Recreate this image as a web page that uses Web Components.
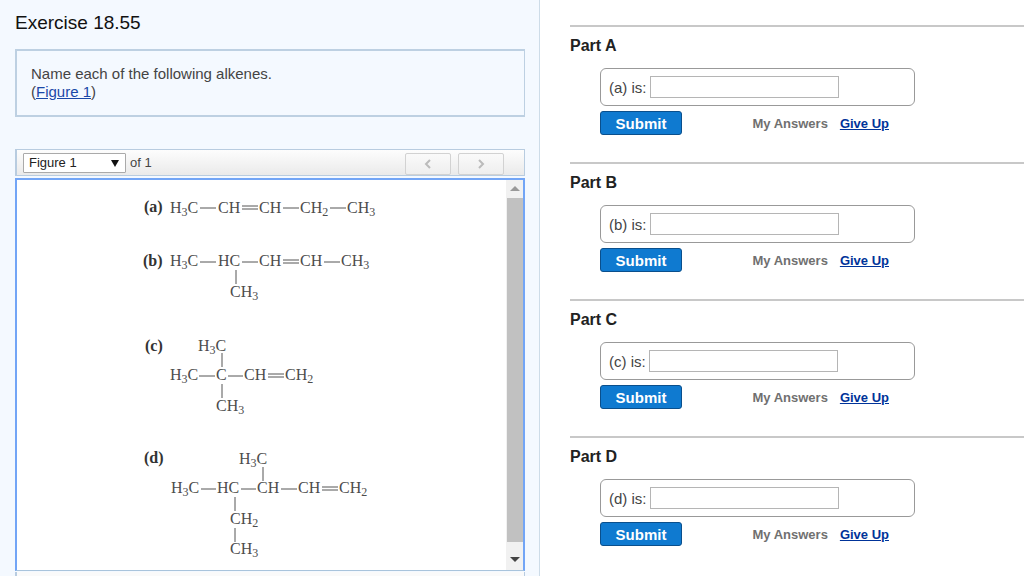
<!DOCTYPE html>
<html lang="en">
<head>
<meta charset="utf-8">
<title>Exercise 18.55</title>
<style>
	body {
		margin: 0;
		font-family: "Liberation Sans", Arial, sans-serif;
		color: #444;
		background: #fff;
	}
</style>
</head>
<body>
<exercise-page>
	<span slot="title">Exercise 18.55</span>
	<problem-box slot="problem">
		Name each of the following alkenes.<br>
		(<figure-link>Figure 1</figure-link>)
	</problem-box>
	<figure-panel slot="problem">
		<alkene-figure></alkene-figure>
	</figure-panel>
	<exercise-part name="Part A" label="(a) is:"></exercise-part>
	<exercise-part name="Part B" label="(b) is:"></exercise-part>
	<exercise-part name="Part C" label="(c) is:"></exercise-part>
	<exercise-part name="Part D" label="(d) is:"></exercise-part>
</exercise-page>

<script>
/**
 * attach an open shadow root to the element and fill it with the template
 */
function render(element, html) {
	const template = document.createElement("template");
	template.innerHTML = html.trim();
	element.attachShadow({mode: "open"});
	element.shadowRoot.appendChild(template.content.cloneNode(true));
}

/**
 * exercise-page: problem on the left, answer parts on the right
 */
class ExercisePage extends HTMLElement {
	static template = `
	<style>
		:host {
			display: grid;
			grid-template-columns: minmax(0, 135fr) minmax(0, 121fr);
			height: 100vh;
		}
		.problem, .parts {
			overflow-y: auto;
			scrollbar-width: none;
		}
		.problem {
			box-sizing: border-box;
			padding: 11px 14px 0 15px;
			background: #f4f9ff;
			border-right: 1px solid #cddce8;
		}
		.parts {
			padding: 25px 0 0 30px;
		}
		h1 {
			margin: 0 0 14px;
			font-size: 19px;
			line-height: 24px;
			font-weight: normal;
			color: #111;
		}
	</style>
	<section class="problem">
		<h1><slot name="title"></slot></h1>
		<slot name="problem"></slot>
	</section>
	<main class="parts"><slot></slot></main>
	`;

	constructor() {
		super();
		render(this, ExercisePage.template);
	}
}

customElements.define("exercise-page", ExercisePage);

/**
 * problem-box: the bordered box with the question
 */
class ProblemBox extends HTMLElement {
	static template = `
	<style>
		:host {
			display: block;
			margin-bottom: 32px;
			padding: 14px;
			border: 2px solid #bdd0e2;
			border-right-width: 1px;
			font-size: 15px;
			line-height: 18px;
		}
	</style>
	<slot></slot>
	`;

	constructor() {
		super();
		render(this, ProblemBox.template);
	}
}

customElements.define("problem-box", ProblemBox);

class FigureLink extends HTMLElement {
	static template = `<style>a { color: #1a48a8; }</style><a href="#figure"><slot></slot></a>`;

	constructor() {
		super();
		render(this, FigureLink.template);
	}
}

customElements.define("figure-link", FigureLink);

/**
 * figure-panel: toolbar with the figure picker, and the viewer below it
 */
class FigurePanel extends HTMLElement {
	static template = `
	<style>
		:host {
			display: block;
		}
		.toolbar {
			display: flex;
			align-items: center;
			box-sizing: border-box;
			height: 27px;
			padding: 0 20px 0 6px;
			border: 1px solid #b8cce0;
			border-left-width: 2px;
			background: linear-gradient(#fdfdfd, #eaeaea);
			font-size: 13px;
		}
		.picker {
			position: relative;
			display: flex;
			margin-right: 4px;
		}
		select {
			appearance: none;
			box-sizing: border-box;
			width: 103px;
			height: 20px;
			padding: 0 20px 0 5px;
			border: 1px solid #aaa;
			border-radius: 1px;
			background: #fff;
			color: #222;
			font: inherit;
		}
		.picker svg {
			position: absolute;
			right: 7px;
			top: 7px;
			pointer-events: none;
		}
		.steps {
			display: flex;
			gap: 7px;
			margin: 2px 0 0 auto;
		}
		.steps button {
			display: flex;
			align-items: center;
			justify-content: center;
			width: 46px;
			height: 22px;
			padding: 0;
			border: 1px solid #d2d2d2;
			border-radius: 2px;
			background: linear-gradient(#fafafa, #eee);
		}
		.viewer {
			display: flex;
			margin-top: 2px;
			border: 2px solid #72a5f6;
			border-bottom: 1px solid #a9c4dc;
			background: #fff;
		}
		.canvas {
			flex: 1;
			min-width: 0;
		}
		.scrollbar {
			display: flex;
			flex-direction: column;
			width: 17px;
			background: #f1f1f1;
		}
		.scrollbar svg {
			display: block;
			flex: none;
		}
		.thumb {
			flex: 1;
			margin: 1px 0 11px 1px;
			background: #c1c1c1;
		}
		.next {
			height: 27px;
			margin-top: 1px;
			border: 1px solid #b8cce0;
			border-top: none;
			border-left-width: 2px;
			background: #fafafa;
		}
	</style>
	<div class="toolbar">
		<div class="picker">
			<select id="figure" aria-label="Figure"><option>Figure 1</option></select>
			<svg width="8" height="7" viewBox="0 0 8 7"><path d="M0 0h8L4 7z" fill="#111"/></svg>
		</div>
		<span>of 1</span>
		<div class="steps">
			<button type="button" aria-label="Previous figure"><svg width="8" height="10" viewBox="0 0 8 10"><path d="M6 1 2 5l4 4" fill="none" stroke="#bbb" stroke-width="2"/></svg></button>
			<button type="button" aria-label="Next figure"><svg width="8" height="10" viewBox="0 0 8 10"><path d="m2 1 4 4-4 4" fill="none" stroke="#bbb" stroke-width="2"/></svg></button>
		</div>
	</div>
	<div class="viewer">
		<div class="canvas"><slot></slot></div>
		<div class="scrollbar" aria-hidden="true">
			<svg width="17" height="17" viewBox="0 0 17 17"><path d="M4 11h10L9 6z" fill="#999"/></svg>
			<div class="thumb"></div>
			<svg width="17" height="17" viewBox="0 0 17 17"><path d="M4 4h10l-5 5z" fill="#444"/></svg>
		</div>
	</div>
	<div class="next"></div>
	`;

	constructor() {
		super();
		render(this, FigurePanel.template);
	}
}

customElements.define("figure-panel", FigurePanel);

/**
 * alkene-figure: draws the four condensed structures
 *
 * groups: [formula, x, baseline]
 * bonds: [x1, y1, x2, y2], double bonds have two lines around that position
 */
class AlkeneFigure extends HTMLElement {
	static template = `
	<style>
		:host {
			display: block;
		}
		svg {
			display: block;
			width: 100%;
		}
		text {
			font: 16px "Liberation Serif", "Times New Roman", serif;
			fill: #4c4c4c;
		}
		.label {
			font-weight: bold;
			fill: #333;
		}
		.sub {
			font-size: 12px;
		}
		path {
			fill: none;
			stroke: #555;
		}
	</style>
	<svg viewBox="17 180 489 390" role="img" aria-label="Four alkenes"></svg>
	`;

	static labels = [["(a)", 144, 212], ["(b)", 143, 266], ["(c)", 145, 351], ["(d)", 144, 463]];

	static groups = [
		["H3C", 170, 213], ["CH", 218, 213], ["CH", 259, 213], ["CH2", 300, 213], ["CH3", 347, 213],
		["H3C", 170, 266], ["HC", 218, 266], ["CH", 259, 266], ["CH", 300, 266], ["CH3", 341, 266],
		["CH3", 230, 297],
		["H3C", 198, 351],
		["H3C", 170, 380], ["C", 216, 380], ["CH", 244, 380], ["CH2", 285, 380],
		["CH3", 216, 411],
		["H3C", 239, 464],
		["H3C", 171, 493], ["HC", 217, 493], ["CH", 257, 493], ["CH", 298, 493], ["CH2", 339, 493],
		["CH2", 230, 524],
		["CH3", 230, 554]
	];

	static bonds = [
		[200, 208, 216, 208], [283, 208, 299, 208], [330, 208, 346, 208],
		[200, 262, 216, 262], [242, 262, 258, 262], [324, 262, 340, 262], [236, 270, 236, 284],
		[199, 376, 215, 376], [228, 376, 243, 376], [222, 353, 222, 367], [222, 384, 222, 398],
		[201, 489, 216, 489], [241, 489, 256, 489], [281, 489, 297, 489],
		[263, 467, 263, 481], [235, 497, 235, 511], [235, 528, 235, 542]
	];

	static doubleBonds = [[242, 208, 258, 208], [283, 262, 299, 262], [268, 376, 284, 376], [322, 489, 338, 489]];

	constructor() {
		super();
		render(this, AlkeneFigure.template);

		const texts = AlkeneFigure.labels.map(([label, x, y]) => {
			return `<text class="label" x="${x}" y="${y}">${label}</text>`;
		});
		AlkeneFigure.groups.forEach(([formula, x, y]) => {
			texts.push(`<text x="${x}" y="${y}">${this.subscript(formula)}</text>`);
		});

		let d = "";
		AlkeneFigure.bonds.forEach(([x1, y1, x2, y2]) => {
			d += `M${x1} ${y1}L${x2} ${y2}`;
		});
		AlkeneFigure.doubleBonds.forEach(([x1, y1, x2, y2]) => {
			d += `M${x1} ${y1 - 2}L${x2} ${y2 - 2}M${x1} ${y1 + 1}L${x2} ${y2 + 1}`;
		});

		this.shadowRoot.querySelector("svg").innerHTML = texts.join("") + `<path d="${d}"/>`;
	}

	subscript(formula) {
		return formula
			.replace(/(\d)([A-Z])/, '<tspan class="sub" dy="3">$1</tspan><tspan dy="-3">$2</tspan>')
			.replace(/(\d)$/, '<tspan class="sub" dy="3">$1</tspan>');
	}
}

customElements.define("alkene-figure", AlkeneFigure);

/**
 * exercise-part: one answer with its submit button
 */
class ExercisePart extends HTMLElement {
	static observedAttributes = ["name", "label"];

	static template = `
	<style>
		:host {
			display: block;
			padding-bottom: 27px;
			border-top: 2px solid #c8c8c8;
		}
		h2 {
			margin: 9px 0 12px;
			font-size: 16px;
			line-height: 20px;
			color: #222;
		}
		form {
			max-width: 315px;
			margin: 0 30px;
		}
		.answer {
			display: flex;
			align-items: center;
			gap: 3px;
			box-sizing: border-box;
			height: 38px;
			padding-left: 8px;
			border: 1px solid #999;
			border-radius: 6px;
			font-size: 15px;
		}
		input {
			box-sizing: border-box;
			width: 189px;
			height: 22px;
			padding: 0 4px;
			border: 1px solid #b5b5b5;
			background: #fff;
			font: inherit;
		}
		.actions {
			display: flex;
			align-items: center;
			gap: 12px;
			margin-top: 5px;
			padding-right: 26px;
			font-size: 13px;
			font-weight: bold;
			color: #707070;
		}
		button {
			box-sizing: border-box;
			width: 82px;
			height: 24px;
			margin-right: auto;
			padding: 0;
			border: 1px solid #0a4f8c;
			border-radius: 3px;
			background: #0f7ad0;
			color: #fff;
			font: bold 15px "Liberation Sans", Arial, sans-serif;
		}
		a {
			color: #039;
		}
	</style>
	<h2 id="name"></h2>
	<form>
		<div class="answer"><label for="answer" id="label"></label><input type="text" id="answer"></div>
		<div class="actions">
			<button type="button">Submit</button>
			<span>My Answers</span>
			<a href="#give-up">Give Up</a>
		</div>
	</form>
	`;

	constructor() {
		super();
		render(this, ExercisePart.template);
	}

	attributeChangedCallback(name, oldValue, newValue) {
		this.shadowRoot.getElementById(name).textContent = newValue;
	}
}

customElements.define("exercise-part", ExercisePart);
</script>
</body>
</html>
